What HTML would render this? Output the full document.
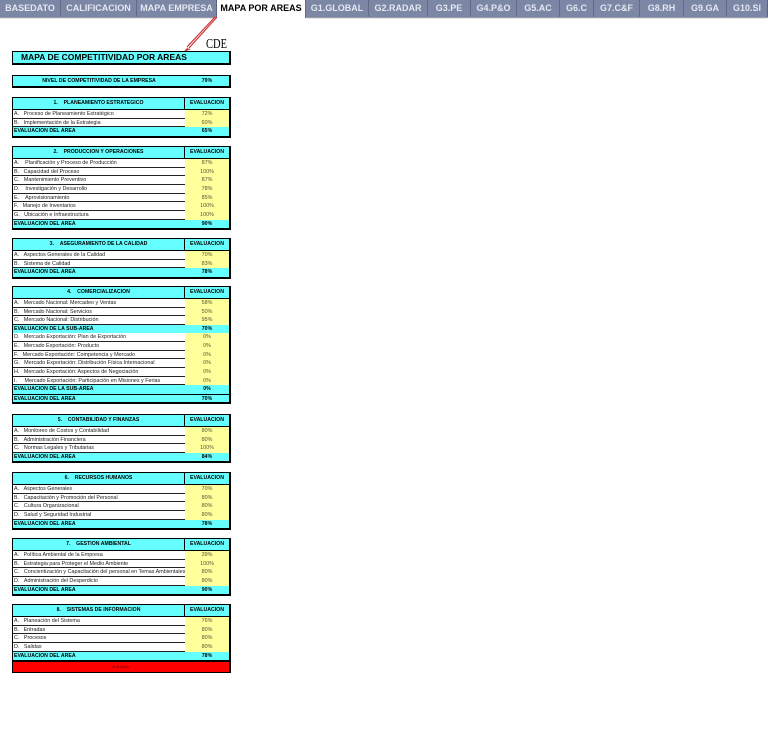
<!DOCTYPE html>
<html><head><meta charset="utf-8">
<style>
*{margin:0;padding:0;box-sizing:border-box}
body{width:768px;height:730px;background:#fff;position:relative;overflow:hidden;font-family:"Liberation Sans",Arial,sans-serif}
.tabs{position:absolute;left:0;top:0;width:768px;height:18px;background:#d9dce6}
.tab{position:absolute;top:0;height:17px;background:#7c87a6;color:#e4e7f0;font-weight:bold;font-size:9px;line-height:17px;text-align:center;border-right:1px solid #5a6380;box-shadow:0 1px 1px #889}
.tab.act{background:#fff;color:#000;height:18px;box-shadow:none}
.box{position:absolute;left:12px;width:219px;border:1px solid #000;border-right-width:2px;border-bottom-width:2px}
.hd{display:flex;height:12px;background:#66ffff;font-size:5.2px;font-weight:bold;line-height:11px;border-bottom:1px solid #000}
.hd .l{flex:0 0 172px;text-align:center;border-right:1px solid #000}
.hd .r{flex:1;text-align:center}
.rw{display:flex;height:8.7px;font-size:5.4px;line-height:8px;color:#222}
.rw .l{flex:0 0 172px;background:#fff;border-bottom:1px solid #222;white-space:nowrap;overflow:hidden;padding-left:1px}
.rw .r{flex:1;background:#ffff9c;text-align:center;color:#553}
.ev{display:flex;height:8.3px;background:#66ffff;font-size:5.2px;font-weight:bold;line-height:8px;color:#000}
.ev .l{flex:0 0 172px;padding-left:1px}
.ev .r{flex:1;text-align:center}
</style></head><body>
<div class="tabs">
<div class="tab" style="left:0;width:61px">BASEDATO</div>
<div class="tab" style="left:61px;width:76px">CALIFICACION</div>
<div class="tab" style="left:137px;width:80px">MAPA EMPRESA</div>
<div class="tab act" style="left:217px;width:89px">MAPA POR AREAS</div>
<div class="tab" style="left:306px;width:63px">G1.GLOBAL</div>
<div class="tab" style="left:369px;width:59px">G2.RADAR</div>
<div class="tab" style="left:428px;width:43px">G3.PE</div>
<div class="tab" style="left:471px;width:46px">G4.P&amp;O</div>
<div class="tab" style="left:517px;width:43px">G5.AC</div>
<div class="tab" style="left:560px;width:34px">G6.C</div>
<div class="tab" style="left:594px;width:46px">G7.C&amp;F</div>
<div class="tab" style="left:640px;width:44px">G8.RH</div>
<div class="tab" style="left:684px;width:43px">G9.GA</div>
<div class="tab" style="left:727px;width:41px">G10.SI</div>
</div>
<svg style="position:absolute;left:180px;top:16px" width="50" height="36" viewBox="0 0 50 36">
<path d="M37 1 L9 32 M35 1 L7 31 M8 32 L5 35 L10 33" stroke="#c33" stroke-width="1.2" fill="none"/>
<text x="26" y="32" font-family="Liberation Serif,serif" font-size="14" textLength="21" lengthAdjust="spacingAndGlyphs" fill="#000">CDE</text>
</svg>
<div class="box" style="top:51px;height:14px;background:#66ffff;font-size:8.5px;font-weight:bold;line-height:11px;padding-left:8px">MAPA DE COMPETITIVIDAD POR AREAS</div>
<div class="box" style="top:75px;height:13px;background:#66ffff;font-size:5.2px;font-weight:bold;line-height:10px;display:flex"><div style="flex:0 0 172px;text-align:center">NIVEL DE COMPETITIVIDAD DE LA EMPRESA</div><div style="flex:1;text-align:center">79%</div></div>

<div class="box" style="top:97px">
<div class="hd"><div class="l">1.&nbsp;&nbsp;&nbsp;&nbsp;PLANEAMIENTO ESTRATEGICO</div><div class="r">EVALUACION</div></div>
<div class="rw"><div class="l">A.&nbsp;&nbsp;&nbsp;Proceso de Planeamiento Estratégico</div><div class="r">72%</div></div>
<div class="rw"><div class="l">B.&nbsp;&nbsp;&nbsp;Implementación de la Estrategia</div><div class="r">60%</div></div>
<div class="ev"><div class="l">EVALUACION DEL AREA</div><div class="r">65%</div></div>
</div>

<div class="box" style="top:146px">
<div class="hd"><div class="l">2.&nbsp;&nbsp;&nbsp;&nbsp;PRODUCCION Y OPERACIONES</div><div class="r">EVALUACION</div></div>
<div class="rw"><div class="l">A.&nbsp;&nbsp;&nbsp;&nbsp;Planificación y Proceso de Producción</div><div class="r">87%</div></div>
<div class="rw"><div class="l">B.&nbsp;&nbsp;&nbsp;Capacidad del Proceso</div><div class="r">100%</div></div>
<div class="rw"><div class="l">C.&nbsp;&nbsp;&nbsp;Mantenimiento Preventivo</div><div class="r">87%</div></div>
<div class="rw"><div class="l">D.&nbsp;&nbsp;&nbsp;&nbsp;Investigación y Desarrollo</div><div class="r">78%</div></div>
<div class="rw"><div class="l">E.&nbsp;&nbsp;&nbsp;&nbsp;Aprovisionamiento</div><div class="r">85%</div></div>
<div class="rw"><div class="l">F.&nbsp;&nbsp;&nbsp;Manejo de Inventarios</div><div class="r">100%</div></div>
<div class="rw"><div class="l">G.&nbsp;&nbsp;&nbsp;Ubicación e Infraestructura</div><div class="r">100%</div></div>
<div class="ev"><div class="l">EVALUACION DEL AREA</div><div class="r">90%</div></div>
</div>

<div class="box" style="top:238px">
<div class="hd"><div class="l">3.&nbsp;&nbsp;&nbsp;&nbsp;ASEGURAMIENTO DE LA CALIDAD</div><div class="r">EVALUACION</div></div>
<div class="rw"><div class="l">A.&nbsp;&nbsp;&nbsp;Aspectos Generales de la Calidad</div><div class="r">70%</div></div>
<div class="rw"><div class="l">B.&nbsp;&nbsp;&nbsp;Sistema de Calidad</div><div class="r">83%</div></div>
<div class="ev"><div class="l">EVALUACION DEL AREA</div><div class="r">78%</div></div>
</div>

<div class="box" style="top:286px">
<div class="hd"><div class="l">4.&nbsp;&nbsp;&nbsp;&nbsp;COMERCIALIZACION</div><div class="r">EVALUACION</div></div>
<div class="rw"><div class="l">A.&nbsp;&nbsp;&nbsp;Mercado Nacional: Mercadeo y Ventas</div><div class="r">58%</div></div>
<div class="rw"><div class="l">B.&nbsp;&nbsp;&nbsp;Mercado Nacional: Servicios</div><div class="r">50%</div></div>
<div class="rw"><div class="l">C.&nbsp;&nbsp;&nbsp;Mercado Nacional: Distribución</div><div class="r">95%</div></div>
<div class="ev"><div class="l">EVALUACION DE LA SUB-AREA</div><div class="r">70%</div></div>
<div class="rw"><div class="l">D.&nbsp;&nbsp;&nbsp;Mercado Exportación: Plan de Exportación</div><div class="r">0%</div></div>
<div class="rw"><div class="l">E.&nbsp;&nbsp;&nbsp;Mercado Exportación: Producto</div><div class="r">0%</div></div>
<div class="rw"><div class="l">F.&nbsp;&nbsp;&nbsp;Mercado Exportación: Competencia y Mercado</div><div class="r">0%</div></div>
<div class="rw"><div class="l">G.&nbsp;&nbsp;&nbsp;Mercado Exportación: Distribución Física Internacional</div><div class="r">0%</div></div>
<div class="rw"><div class="l">H.&nbsp;&nbsp;&nbsp;Mercado Exportación: Aspectos de Negociación</div><div class="r">0%</div></div>
<div class="rw"><div class="l">I.&nbsp;&nbsp;&nbsp;&nbsp;&nbsp;Mercado Exportación: Participación en Misiones y Ferias</div><div class="r">0%</div></div>
<div class="ev"><div class="l">EVALUACION DE LA SUB-AREA</div><div class="r">0%</div></div>
<div class="ev" style="border-top:1px solid #000"><div class="l">EVALUACION DEL AREA</div><div class="r">70%</div></div>
</div>

<div class="box" style="top:414px">
<div class="hd"><div class="l">5.&nbsp;&nbsp;&nbsp;&nbsp;CONTABILIDAD Y FINANZAS</div><div class="r">EVALUACION</div></div>
<div class="rw"><div class="l">A.&nbsp;&nbsp;&nbsp;Monitoreo de Costos y Contabilidad</div><div class="r">80%</div></div>
<div class="rw"><div class="l">B.&nbsp;&nbsp;&nbsp;Administración Financiera</div><div class="r">80%</div></div>
<div class="rw"><div class="l">C.&nbsp;&nbsp;&nbsp;Normas Legales y Tributarias</div><div class="r">100%</div></div>
<div class="ev"><div class="l">EVALUACION DEL AREA</div><div class="r">84%</div></div>
</div>

<div class="box" style="top:472px">
<div class="hd"><div class="l">6.&nbsp;&nbsp;&nbsp;&nbsp;RECURSOS HUMANOS</div><div class="r">EVALUACION</div></div>
<div class="rw"><div class="l">A.&nbsp;&nbsp;&nbsp;Aspectos Generales</div><div class="r">70%</div></div>
<div class="rw"><div class="l">B.&nbsp;&nbsp;&nbsp;Capacitación y Promoción del Personal</div><div class="r">80%</div></div>
<div class="rw"><div class="l">C.&nbsp;&nbsp;&nbsp;Cultura Organizacional</div><div class="r">80%</div></div>
<div class="rw"><div class="l">D.&nbsp;&nbsp;&nbsp;Salud y Seguridad Industrial</div><div class="r">80%</div></div>
<div class="ev"><div class="l">EVALUACION DEL AREA</div><div class="r">78%</div></div>
</div>

<div class="box" style="top:538px">
<div class="hd"><div class="l">7.&nbsp;&nbsp;&nbsp;&nbsp;GESTION AMBIENTAL</div><div class="r">EVALUACION</div></div>
<div class="rw"><div class="l">A.&nbsp;&nbsp;&nbsp;Política Ambiental de la Empresa</div><div class="r">39%</div></div>
<div class="rw"><div class="l">B.&nbsp;&nbsp;&nbsp;Estrategia para Proteger el Medio Ambiente</div><div class="r">100%</div></div>
<div class="rw"><div class="l">C.&nbsp;&nbsp;&nbsp;Concientización y Capacitación del personal en Temas Ambientales</div><div class="r">80%</div></div>
<div class="rw"><div class="l">D.&nbsp;&nbsp;&nbsp;Administración del Desperdicio</div><div class="r">80%</div></div>
<div class="ev"><div class="l">EVALUACION DEL AREA</div><div class="r">90%</div></div>
</div>

<div class="box" style="top:604px">
<div class="hd"><div class="l">8.&nbsp;&nbsp;&nbsp;&nbsp;SISTEMAS DE INFORMACION</div><div class="r">EVALUACION</div></div>
<div class="rw"><div class="l">A.&nbsp;&nbsp;&nbsp;Planeación del Sistema</div><div class="r">76%</div></div>
<div class="rw"><div class="l">B.&nbsp;&nbsp;&nbsp;Entradas</div><div class="r">80%</div></div>
<div class="rw"><div class="l">C.&nbsp;&nbsp;&nbsp;Procesos</div><div class="r">80%</div></div>
<div class="rw"><div class="l">D.&nbsp;&nbsp;&nbsp;Salidas</div><div class="r">80%</div></div>
<div class="ev"><div class="l">EVALUACION DEL AREA</div><div class="r">78%</div></div>
</div>
<div style="position:absolute;left:12px;top:661px;width:219px;height:12px;background:#f00;border:1px solid #000;border-right-width:2px;font-size:4px;line-height:10px;text-align:center;color:#600">Ir al inicio</div>
</body></html>
